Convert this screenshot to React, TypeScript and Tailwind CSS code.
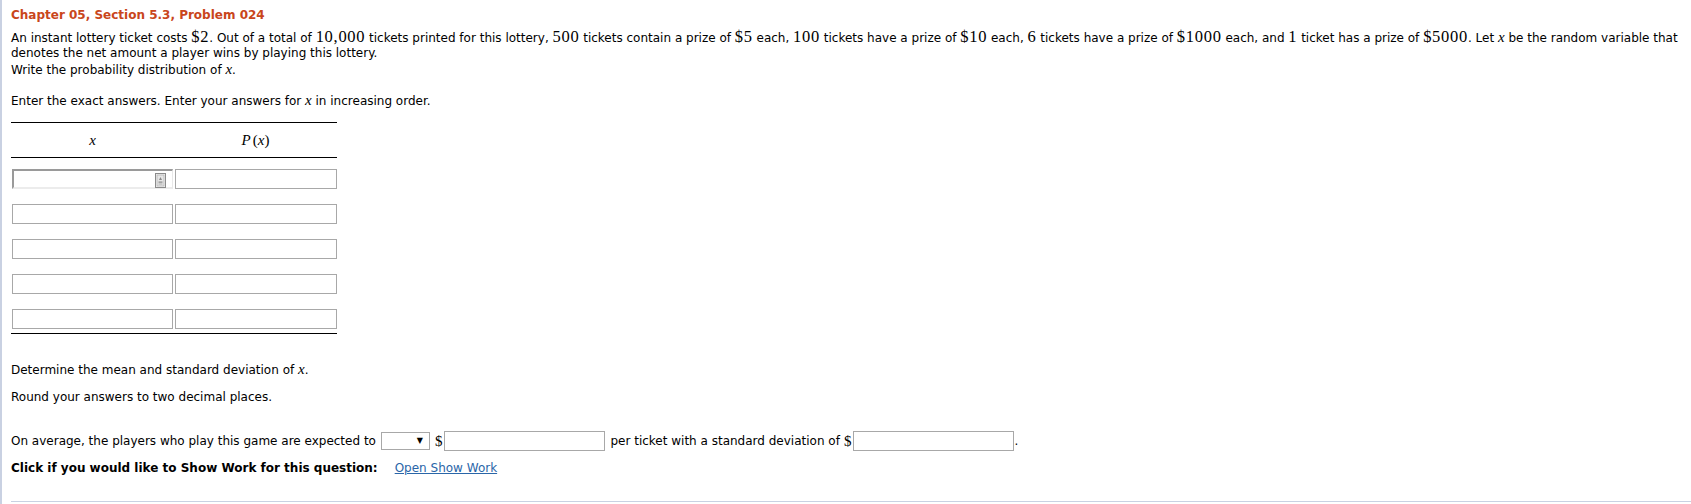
import React from 'react';

const sans = { fontFamily: '"DejaVu Sans", Verdana, sans-serif' };

function M({ children }: { children: React.ReactNode }) {
  return <span className="font-['Liberation_Serif',serif] text-[16.5px] tracking-[0.7px]">{children}</span>;
}

function X() {
  return <span className="font-['Liberation_Serif',serif] text-[15px] italic">x</span>;
}

function KeypadIcon() {
  return (
    <svg width="11" height="15" viewBox="0 0 11 15" className="absolute right-[6px] top-[2px]">
      <rect x="0.5" y="0.5" width="10" height="14" fill="#f4f4f4" stroke="#8a8a8a" />
      <rect x="2" y="2" width="7" height="11" fill="#e6e6e6" stroke="#b5b5b5" strokeWidth="0.8" />
      <path d="M5.5 4 L7 7 L4 7 Z" fill="#888" />
      <rect x="3.5" y="8.5" width="4" height="1.2" fill="#888" />
      <rect x="3.5" y="10.5" width="4" height="1" fill="#aaa" />
    </svg>
  );
}

function Box({ w = 'w-[161px]', first = false }: { w?: string; first?: boolean }) {
  if (first) {
    return (
      <div className={`relative h-[20px] ${w} border-t-2 border-l-2 border-t-[#9a9a9a] border-l-[#9a9a9a] border-r border-b-2 border-r-[#e8e8e8] border-b-[#ececec] bg-white`}>
        <KeypadIcon />
      </div>
    );
  }
  return <div className={`h-[20px] ${w} border border-[#a8a8a8] bg-white`} />;
}

export default function App() {
  const rows = [0, 1, 2, 3, 4];
  return (
    <div className="h-[504px] w-[1691px] overflow-hidden border-l-2 border-[#c9d1e2] bg-white text-[12px] text-black" style={sans}>
      <div className="pl-[9px] pt-[7px]">
        <div className="h-[16px] leading-[16px] font-bold text-[#c9461b]">Chapter 05, Section 5.3, Problem 024</div>

        <div className="mt-[6px] leading-[16px]">
          <div className="h-[16px] whitespace-nowrap">
            An instant lottery ticket costs <M>$2</M>. Out of a total of <M>10,000</M> tickets printed for this lottery, <M>500</M> tickets
            contain a prize of <M>$5</M> each, <M>100</M> tickets have a prize of <M>$10</M> each, <M>6</M> tickets have a prize of{' '}
            <M>$1000</M> each, and <M>1</M> ticket has a prize of <M>$5000</M>. Let <X /> be the random variable that
          </div>
          <div className="h-[16px] whitespace-nowrap">denotes the net amount a player wins by playing this lottery.</div>
          <div className="h-[16px] whitespace-nowrap">
            Write the probability distribution of <X />.
          </div>
        </div>

        <div className="mt-[15px] h-[16px] leading-[16px] whitespace-nowrap">
          Enter the exact answers. Enter your answers for <X /> in increasing order.
        </div>

        <div className="mt-[14px] w-[326px]">
          <div className="flex h-[36px] items-center border-t border-b border-black">
            <div className="w-[163px] text-center">
              <X />
            </div>
            <div className="w-[163px] text-center font-['Liberation_Serif',serif] text-[15px]">
              <i>P</i>
              <span className="ml-[2px]">(</span>
              <i>x</i>)
            </div>
          </div>
          <div className="flex flex-col gap-[15px] pt-[11px] pb-[4px] border-b border-black">
            {rows.map((r) => (
              <div key={r} className="flex gap-[2px] pl-[1px]">
                <Box first={r === 0} />
                <Box w="w-[162px]" />
              </div>
            ))}
          </div>
        </div>

        <div className="mt-[27px] h-[16px] leading-[16px]">
          Determine the mean and standard deviation of <X />.
        </div>
        <div className="mt-[12px] h-[16px] leading-[16px]">Round your answers to two decimal places.</div>

        <div className="mt-[26px] flex h-[20px] items-center whitespace-nowrap">
          <span>On average, the players who play this game are expected to</span>
          <div className="ml-[5px] flex h-[18px] w-[49px] items-center justify-end border border-[#a8a8a8] bg-white pr-[6px] text-[8px]">▼</div>
          <span className="ml-[5px] mr-[2px] font-['Liberation_Serif',serif] text-[15px]">$</span>
          <Box />
          <span className="ml-[5px]">per ticket with a standard deviation of</span>
          <span className="ml-[4px] mr-[2px] font-['Liberation_Serif',serif] text-[15px]">$</span>
          <Box />
          <span>.</span>
        </div>

        <div className="mt-[9px] flex h-[16px] items-center leading-[16px] whitespace-nowrap">
          <span className="font-bold">Click if you would like to Show Work for this question:</span>
          <a className="ml-[17px] text-[#2a66a8] underline">Open Show Work</a>
        </div>
      </div>
      <div className="ml-[9px] mt-[25px] border-t border-[#c9d1e2]" />
    </div>
  );
}
